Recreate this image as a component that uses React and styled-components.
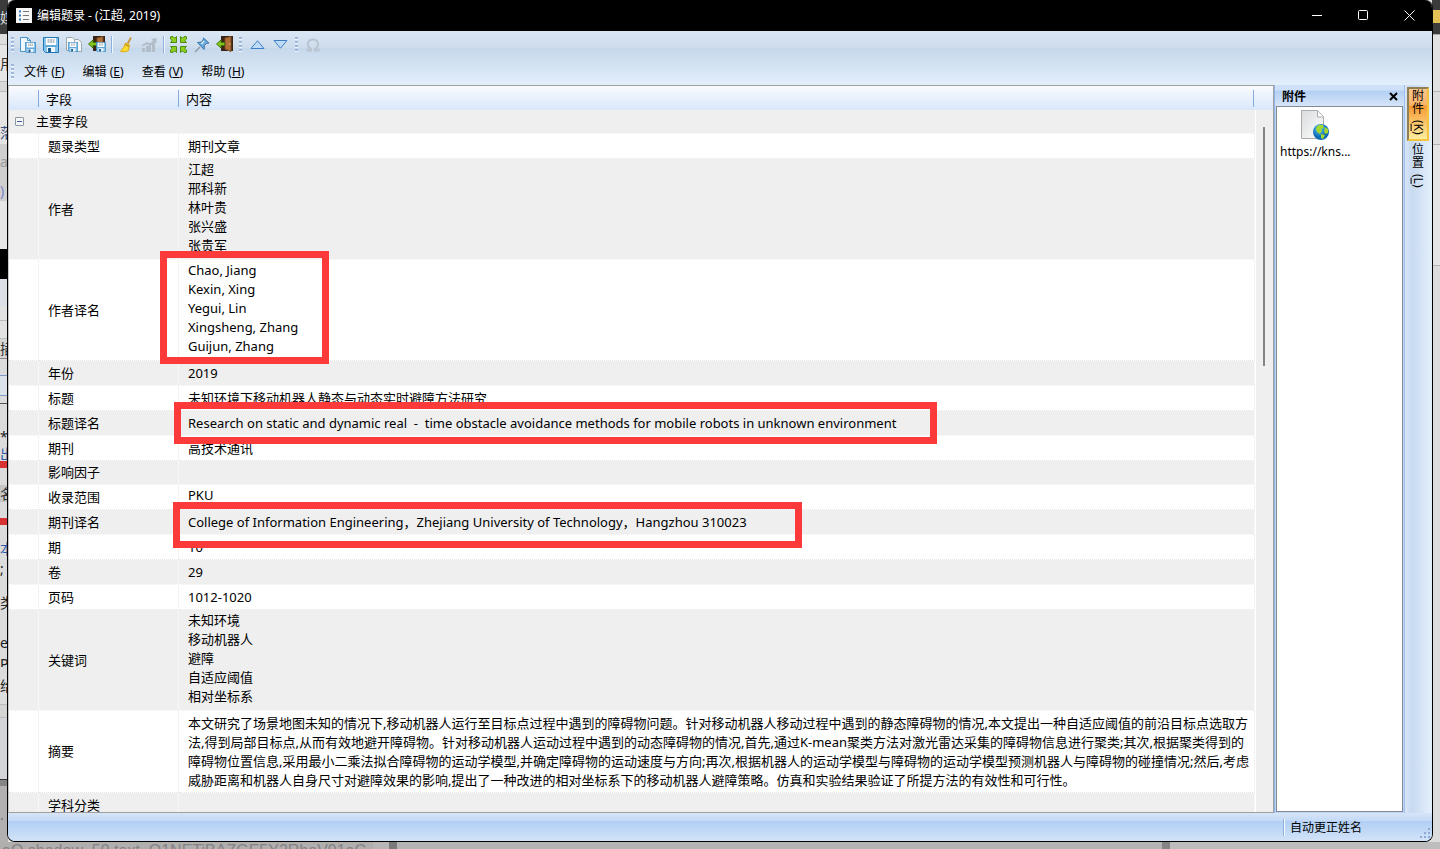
import React from 'react';
import styled, { createGlobalStyle, css } from 'styled-components';

const Global = createGlobalStyle`
  *, *::before, *::after { box-sizing: border-box; }
  body {
    margin: 0;
    overflow: hidden;
    font-family: 'Noto Sans', 'Noto Sans CJK SC', sans-serif;
    font-size: 13px;
    line-height: 19px;
    color: #000;
  }
  button { font: inherit; color: inherit; background: none; border: 0; padding: 0; margin: 0; }
`;

/* ---------- desktop behind the window ---------- */

const Desktop = styled.div`
  height: 100vh;
  display: grid;
  grid-template-columns: 8px minmax(0, 1fr) 8px;
  grid-template-rows: minmax(0, 1fr) 7px;
  background: #dcdcdc;
`;

const Strip = styled.div`
  display: flex;
  flex-direction: column;
  overflow: hidden;
`;

const Segment = styled.div`
  flex: ${p => (p.$h ? `0 0 ${p.$h}px` : '1')};
  display: flex;
  align-items: center;
  overflow: hidden;
  white-space: nowrap;
  background: ${p => p.$bg};
  color: ${p => p.$color || '#333'};
  border-top: ${p => (p.$line ? `1px solid ${p.$line}` : '0')};
  font-size: 14px;
`;

const Floor = styled.div`
  grid-column: 1 / -1;
  display: flex;
  overflow: hidden;
  background: #bcbcbc;
`;

const FloorPart = styled.div`
  flex: ${p => p.$flex};
  height: 8px;
  padding-left: 2px;
  overflow: hidden;
  white-space: nowrap;
  background: ${p => p.$bg};
  color: #858383;
  font: 16px/18px 'Liberation Sans', sans-serif;
`;

const leftParts = [
  [34, '#3b3b3b', '媒', '#ddd'],
  [10, '#dedede'],
  [37, '#e6e6e6', '用', '#333', '#bbb'],
  [10, '#d8d8d8', '', '', '#bbb'],
  [29, '#e4e4e4', '', '', '#bbb'],
  [24, '#e4e4e4', '落', '#35507c'],
  [35, '#cfcfcf', 'a', '#999'],
  [22, '#cfcfcf', ')', '#7a86c8'],
  [48, '#e6e6e6'],
  [30, '#000'],
  [27, '#dbdfe6'],
  [14, '#e2e2e2'],
  [18, '#e2e2e2', '', '', '#bbb'],
  [20, '#d6d6d6', '插', '#333', '#bbb'],
  [17, '#dcdcdc', '', '', '#888'],
  [20, '#dce2ea', '', '', '#7f9dc8'],
  [8, '#dcdcdc', '', '', '#7f9dc8'],
  [24, '#dcdcdc', '', '', '#555'],
  [18, '#dcdcdc', '*', '#222'],
  [16, '#dcdcdc', '出', '#2a5ba6'],
  [7, '#d93232'],
  [17, '#dcdcdc'],
  [17, '#c6c6c6', '名', '#333'],
  [16, '#dcdcdc'],
  [7, '#d93232'],
  [14, '#dcdcdc'],
  [18, '#dcdcdc', '本', '#2a5ba6'],
  [22, '#dcdcdc', ';', '#222'],
  [46, '#dcdcdc', '类', '#222'],
  [34, '#dcdcdc', 'e', '#222'],
  [0, '#dcdcdc', 'P', '#222'],
  [37, '#dcdcdc', '给', '#222'],
  [13, '#d4d4d4', '', '', '#bbb'],
  [62, '#d2d4d8', '', '', '#bbb'],
  [7, '#858585', '', '', '#333'],
  [56, '#b2b0b0', '.', '#777'],
];

const rightParts = [
  [10, '#3b3b3b'],
  [13, '#e3c056'],
  [11, '#3b3b3b'],
  [57, '#e2e2e2', '', '', '#aaa'],
  [53, '#dedede', '', '', '#b4b4b4'],
  [121, '#e4e4e4', '', '', '#b4b4b4'],
  [0, '#dcdcdc', '', '', '#b4b4b4'],
];

const SideStrip = ({ parts }) => (
  <Strip aria-hidden="true">
    {parts.map(([h, bg, text, color, line], i) => (
      <Segment key={i} $h={h} $bg={bg} $color={color} $line={line}>{text}</Segment>
    ))}
  </Strip>
);

/* ---------- window frame ---------- */

const Window = styled.main`
  display: flex;
  flex-direction: column;
  min-height: 0;
  margin: 0 -1px;
  border: 1px solid #000;
  border-top: 0;
  border-radius: 8px;
  overflow: hidden;
  background: #cfe0f5;
  position: relative;
`;

const TitleBar = styled.header`
  flex: 0 0 31px;
  display: flex;
  align-items: center;
  background: #000;
  color: #fff;
  padding-left: 8px;
`;

const Title = styled.h1`
  flex: 1;
  margin: 0 0 0 5px;
  font-size: 12px;
  font-weight: 400;
`;

const CaptionButton = styled.button`
  width: 46px;
  height: 31px;
  display: flex;
  align-items: center;
  justify-content: center;
`;

const Bars = styled.div`
  flex: 0 0 54px;
  background: linear-gradient(#dae6f4 0, #cddcec 17px, #c5d8eb 17px, #e3eefb 54px);
`;

const Toolbar = styled.div`
  height: 27px;
  display: flex;
  align-items: center;
  padding-left: 3px;
`;

const MenuBar = styled.nav`
  height: 27px;
  display: flex;
  align-items: center;
  padding-left: 3px;
`;

const Grip = styled.span`
  width: 3px;
  height: 15px;
  margin-right: ${p => p.$after || 6}px;
  background: repeating-linear-gradient(#9db8dc 0 2px, #f4f9ff 2px 3px, transparent 3px 4px);
`;

const Divider = styled.span`
  width: 2px;
  height: 17px;
  margin: 0 4px 0 5px;
  background: linear-gradient(90deg, #8fb0df 50%, #f1f7ff 50%);
`;

const ToolButton = styled.button`
  width: 18px;
  height: 18px;
  margin-right: ${p => p.$after ?? 5}px;
  display: flex;
  align-items: center;
  justify-content: center;
  svg { display: block; flex: none; }
`;

const MenuButton = styled.button`
  font-size: 12px;
  margin-right: 18px;
  white-space: nowrap;
`;

/* ---------- record table ---------- */

const Body = styled.div`
  flex: 1;
  min-height: 0;
  display: flex;
`;

const TablePane = styled.section`
  flex: 1;
  min-width: 0;
  display: flex;
  background: #fff;
  border: 1px solid #a0a0a0;
  border-left-color: #c8c8c8;
  position: relative;
  overflow: hidden;
`;

const Records = styled.table`
  flex: 1;
  min-width: 0;
  align-self: flex-start;
  border-collapse: separate;
  border-spacing: 0;
  table-layout: fixed;
  width: 100%;
`;

const HeadCell = styled.th`
  height: 24px;
  padding: 2px 0 0 7px;
  text-align: left;
  font-weight: 400;
  line-height: 19px;
  background:
    linear-gradient(#83abdf, #83abdf) ${p => (p.$last ? 'calc(100% - 1px)' : '100%')} 4px / 1px 17px no-repeat,
    linear-gradient(#f9fbff, #d9e7fb);
`;

const Row = styled.tr`
  height: ${p => p.$h}px;
  background: ${p => (p.$shade ? '#efefef' : '#fff')};
  td, th {
    padding: 0;
    font-weight: 400;
    text-align: left;
    border-bottom: 1px dotted ${p => (p.$shade ? '#fff' : '#e6e6e6')};
    border-right: 1px dotted ${p => (p.$shade ? '#fff' : '#e6e6e6')};
  }
  th { padding-left: 9px; }
`;

const Value = styled.td`
  && {
    padding-left: 9px;
    padding-top: ${p => (p.$top ? 1 : 0)}px;
    vertical-align: ${p => (p.$top ? 'top' : 'middle')};
    white-space: pre-wrap;
  }
`;

const GroupCell = styled.td`
  && { border-right-color: transparent; }
`;

const GroupLine = styled.div`
  display: flex;
  align-items: center;
  gap: 12px;
  padding-left: 6px;
`;

const Toggle = styled.button`
  width: 9px;
  height: 9px;
  border: 1px solid #8c97a8;
  border-radius: 1px;
  background: linear-gradient(#3c5a99, #3c5a99) center / 5px 1px no-repeat, #f6f6f6;
`;

const Track = styled.div`
  flex: 0 0 18px;
  padding-top: 41px;
  padding-left: 8px;
  background: linear-gradient(#f9fbff, #d9e7fb) 0 0 / 100% 24px no-repeat, linear-gradient(90deg, #fff 1px, #efefef 1px);
`;

const Thumb = styled.div`
  width: 2px;
  height: 239px;
  background: #858585;
`;

const Mark = styled.div`
  position: absolute;
  left: ${p => p.$x}px;
  top: ${p => p.$y}px;
  width: ${p => p.$w}px;
  height: ${p => p.$h}px;
  border: 7px solid #fc3a3a;
`;

/* ---------- attachments ---------- */

const Side = styled.aside`
  flex: 0 0 131px;
  display: flex;
  flex-direction: column;
  background: #bcd5f5;
  padding: 0 1px 1px;
  border-left: 1px solid #8fb4e6;
  border-right: 1px solid #9fc0ec;
`;

const SideHead = styled.div`
  flex: 0 0 21px;
  display: flex;
  align-items: center;
  justify-content: space-between;
  padding: 2px 6px 0 7px;
  background: linear-gradient(#cfe1f9 0 5px, #b3cff3 6px, #d5e5f9);
  margin: 0 -1px;
  svg { display: block; }
`;

const SideTitle = styled.h2`
  margin: 0;
  font-size: 12px;
  font-weight: 700;
`;

const Files = styled.div`
  flex: 1;
  background: #fff;
  border: 1px solid #848a95;
  padding: 3px;
`;

const FileLink = styled.a`
  display: flex;
  flex-direction: column;
  width: 72px;
  color: #000;
  font-size: 12px;
  text-decoration: none;
  gap: 2px;
  svg { display: block; margin-left: 20px; }
`;

const TabRail = styled.div`
  flex: 0 0 27px;
  display: flex;
  flex-direction: column;
  padding: 2px 0 0 2px;
  background: linear-gradient(90deg, #d8e5f5 0, #c7daf0 7px, #e4effc);
`;

const RailTab = styled.button`
  width: 22px;
  height: 54px;
  display: flex;
  flex-direction: column;
  align-items: center;
  font-size: 12px;
  line-height: 13px;
  border: 2px solid transparent;
  ${p => p.$active && css`
    border-color: #f3c53c;
    border-left-color: #8f7f55;
    border-top-color: #8f7f55;
    background: linear-gradient(#fbc58c 0, #fbb46a 32%, #f89a33 34%, #fdeea0);
  `}
`;

const Upright = styled.span`
  writing-mode: vertical-rl;
  line-height: 16px;
  margin-top: 5px;
`;

/* ---------- status bar ---------- */

const StatusBar = styled.footer`
  flex: 0 0 28px;
  display: flex;
  justify-content: flex-end;
  align-items: center;
  background: linear-gradient(#d6e5f8 0, #c3d9f6 8px, #b1cff3 8px, #d2e3f8);
`;

const Status = styled.span`
  width: 136px;
  font-size: 12px;
  padding-left: 6px;
  line-height: 17px;
  border-left: 1px solid #8fb0df;
  box-shadow: inset 1px 0 #f4f8ff;
`;

const SizeGrip = styled.svg`
  align-self: flex-end;
  margin: 0 1px 1px 0;
`;

/* ---------- icons ---------- */

const Floppy = ({ x = 0, y = 0, s = 16 }) => (
  <svg x={x} y={y} width={s} height={s} viewBox="0 0 16 16">
    <path d="M.5 .5h15v15H2.500l-2-2z" fill="#86c3ea" stroke="#1f76b5" />
    <path d="M3 1h10v7H3z" fill="#fff" />
    <path d="M4.500 3h7M4.500 5h7" stroke="#76848f" strokeDasharray="2 .6" />
    <path d="M2 9h12" stroke="#3f93cf" />
    <path d="M4 10h8v5H4z" fill="#eef6fb" />
    <path d="M5 11h3v4H5z" fill="#1c5e93" />
  </svg>
);

const Door = () => (
  <g>
    <path d="M5 0h12v15H5z" fill="#3a2416" />
    <path d="M9 2l6-1.500v15L9 13z" fill="#b3713a" stroke="#7b4a22" />
    <path d="M13 8h1.500" stroke="#f0c070" />
    <path d="M.5 8l4.500-4v2.500h3.500v3H5V12z" fill="#86c41c" stroke="#3f7a09" />
  </g>
);

const inward = 'M6.500 .5v6h-6L2.300 4.700 .5 3 .5 .8 3 .5 4.700 2.300z';

const icons = {
  saveNew: (
    <svg width="18" height="16" viewBox="0 0 18 16">
      <path d="M1.500 .5h7l3 3v11h-10z" fill="#eef7fd" stroke="#4b96c9" />
      <path d="M8.500 .5v3h3" fill="none" stroke="#4b96c9" />
      <Floppy x={6} y={5} s={11} />
    </svg>
  ),
  save: <svg width="16" height="16"><Floppy /></svg>,
  saveCopy: (
    <svg width="18" height="16" viewBox="0 0 18 16">
      <path d="M1.500 .5h6l2 2v11h-8z" fill="#f6f8f9" stroke="#9ba6ae" />
      <path d="M9.500 2.500h4l3 3v9h-7z" fill="#f6f8f9" stroke="#9ba6ae" />
      <Floppy x={3} y={5} s={10} />
    </svg>
  ),
  saveExit: (
    <svg width="18" height="17" viewBox="0 0 18 17">
      <Door />
      <Floppy x={8} y={6} s={10} />
    </svg>
  ),
  broom: (
    <svg width="16" height="16" viewBox="0 0 16 16">
      <path d="M13 .5L9.500 7" stroke="#c8963c" strokeWidth="1.800" />
      <path d="M7.500 6l4 2-1 5.500Q8 15.500 2.500 14.500 6 11 7.500 6z" fill="#f9dc30" stroke="#e0ac14" />
      <path d="M7 7.500l4 2" stroke="#a9722c" />
    </svg>
  ),
  chart: (
    <svg width="16" height="16" viewBox="0 0 16 16" fill="#b3bdc8">
      <path d="M1 11h3v4H1zM5 9h5v6H5zM11 5h3v10h-3z" />
      <path d="M1 9.500V8l5-3 3 1.500 3-3-2-1.500 5.500-1v5.500L13.500 5 9.500 9 6 7.500z" />
    </svg>
  ),
  grid: (
    <svg width="17" height="17" viewBox="0 0 17 17" fill="#8fd01c" stroke="#4d8c10">
      <path d={inward} />
      <path d={inward} transform="translate(17 0) scale(-1 1)" />
      <path d={inward} transform="translate(0 17) scale(1 -1)" />
      <path d={inward} transform="translate(17 17) scale(-1 -1)" />
    </svg>
  ),
  pin: (
    <svg width="16" height="16" viewBox="0 0 16 16">
      <path d="M1 15l5-5" stroke="#8d99a5" strokeWidth="1.500" />
      <path d="M9.500 1l5.500 5-2.500 .5-2 2L10 12.500 3.500 5.500l4-.5 1.500-2z" fill="#6aa9dc" stroke="#3d77ad" />
      <path d="M10 4L7.500 7" stroke="#d9ecfa" strokeWidth="1.500" />
    </svg>
  ),
  exit: <svg width="17" height="17" viewBox="0 0 17 17"><Door /></svg>,
  up: <svg width="15" height="9" viewBox="0 0 15 9"><path d="M7.500 .8L14 8.500H1z" fill="#bedcf7" stroke="#3c7fc6" /></svg>,
  down: <svg width="15" height="9" viewBox="0 0 15 9"><path d="M7.500 8.200L14 .5H1z" fill="#bedcf7" stroke="#3c7fc6" /></svg>,
  omega: (
    <svg width="14" height="14" viewBox="0 0 14 14" fill="none" stroke="#b9c4d1" strokeWidth="2">
      <path d="M1.500 10.500v2H5V11C0 8 1.500 1.500 7 1.500S14 8 9 11v1.500h3.500v-2" />
    </svg>
  ),
};

const ListIcon = () => (
  <svg width="16" height="15" viewBox="0 0 16 15">
    <rect width="16" height="15" fill="#f7f7f7" />
    <path d="M3 3.500h2M3 7.500h2M3 11.500h2" stroke="#2b7cc0" strokeWidth="2" />
    <path d="M7 3.500h6M7 7.500h6M7 11.500h6" stroke="#777" />
  </svg>
);

const WebFile = () => (
  <svg width="30" height="30" viewBox="0 0 30 30">
    <defs>
      <linearGradient id="sheet" x2="1" y2="1"><stop stopColor="#d9dbdc" /><stop offset="1" stopColor="#fff" /></linearGradient>
      <radialGradient id="sea" cx=".4" cy=".3"><stop stopColor="#59c8f3" /><stop offset="1" stopColor="#0d6cb5" /></radialGradient>
    </defs>
    <path d="M1.500 .5h16l6 6v22h-22z" fill="url(#sheet)" stroke="#a9adb0" />
    <path d="M17.500 1v6h6" fill="#fff" stroke="#a9adb0" />
    <circle cx="21" cy="22" r="8" fill="url(#sea)" />
    <path d="M17 16q3-2 6-1l1 3-3 1 1 2-2 3-3-2-1-3zM25 17l3 2v4l-3 1-1-3zM21 24l4 1-2 4-2-1z" fill="#a3d82e" />
  </svg>
);

/* ---------- content ---------- */

const rows = [
  { label: '题录类型', value: '期刊文章', h: 25 },
  { label: '作者', value: '江超\n邢科新\n林叶贵\n张兴盛\n张贵军', h: 101, top: true },
  { label: '作者译名', value: 'Chao, Jiang\nKexin, Xing\nYegui, Lin\nXingsheng, Zhang\nGuijun, Zhang', h: 101, top: true },
  { label: '年份', value: '2019', h: 25 },
  { label: '标题', value: '未知环境下移动机器人静态与动态实时避障方法研究', h: 25 },
  { label: '标题译名', value: 'Research on static and dynamic real  -  time obstacle avoidance methods for mobile robots in unknown environment', h: 25 },
  { label: '期刊', value: '高技术通讯', h: 25 },
  { label: '影响因子', value: '', h: 24 },
  { label: '收录范围', value: 'PKU', h: 25, top: true },
  { label: '期刊译名', value: 'College of Information Engineering，Zhejiang University of Technology，Hangzhou 310023', h: 25 },
  { label: '期', value: '10', h: 25 },
  { label: '卷', value: '29', h: 25 },
  { label: '页码', value: '1012-1020', h: 25 },
  { label: '关键词', value: '未知环境\n移动机器人\n避障\n自适应阈值\n相对坐标系', h: 101, top: true },
  { label: '摘要', value: '本文研究了场景地图未知的情况下,移动机器人运行至目标点过程中遇到的障碍物问题。针对移动机器人移动过程中遇到的静态障碍物的情况,本文提出一种自适应阈值的前沿目标点选取方法,得到局部目标点,从而有效地避开障碍物。针对移动机器人运动过程中遇到的动态障碍物的情况,首先,通过K-mean聚类方法对激光雷达采集的障碍物信息进行聚类;其次,根据聚类得到的障碍物位置信息,采用最小二乘法拟合障碍物的运动学模型,并确定障碍物的运动速度与方向;再次,根据机器人的运动学模型与障碍物的运动学模型预测机器人与障碍物的碰撞情况;然后,考虑威胁距离和机器人自身尺寸对避障效果的影响,提出了一种改进的相对坐标系下的移动机器人避障策略。仿真和实验结果验证了所提方法的有效性和可行性。', h: 82 },
  { label: '学科分类', value: '', h: 25 },
];

const menus = [['文件', 'F'], ['编辑', 'E'], ['查看', 'V'], ['帮助', 'H']];

const marks = [
  { x: 151, y: 165, w: 169, h: 113 },
  { x: 165, y: 316, w: 763, h: 42 },
  { x: 164, y: 416, w: 629, h: 46 },
];

const Tool = ({ name, label, after }) => (
  <ToolButton type="button" aria-label={label} $after={after}>{icons[name]}</ToolButton>
);

export default function App() {
  return (
    <>
      <Global />
      <Desktop>
        <SideStrip parts={leftParts} />
        <Window>
          <TitleBar>
            <ListIcon />
            <Title>编辑题录 - (江超, 2019)</Title>
            <CaptionButton type="button" aria-label="最小化">
              <svg width="11" height="11"><path d="M0 5.500h10" stroke="#fff" /></svg>
            </CaptionButton>
            <CaptionButton type="button" aria-label="最大化">
              <svg width="11" height="11"><rect x=".5" y=".5" width="9" height="9" rx="1" fill="none" stroke="#fff" /></svg>
            </CaptionButton>
            <CaptionButton type="button" aria-label="关闭">
              <svg width="11" height="11"><path d="M.5 .5l10 10M10.500 .5l-10 10" stroke="#fff" /></svg>
            </CaptionButton>
          </TitleBar>

          <Bars>
            <Toolbar role="toolbar" aria-label="工具栏">
              <Grip $after={5} />
              <Tool name="saveNew" label="保存并新建" />
              <Tool name="save" label="保存" />
              <Tool name="saveCopy" label="保存副本" />
              <Tool name="saveExit" label="保存并退出" after={0} />
              <Divider />
              <Tool name="broom" label="清理" />
              <Tool name="chart" label="更新" after={0} />
              <Divider />
              <Tool name="grid" label="收起" after={6} />
              <Tool name="pin" label="固定" after={4} />
              <Tool name="exit" label="退出" after={6} />
              <Grip />
              <Tool name="up" label="上一条" />
              <Tool name="down" label="下一条" after={6} />
              <Grip />
              <Tool name="omega" label="符号" />
            </Toolbar>
            <MenuBar>
              <Grip $after={10} />
              {menus.map(([name, key]) => (
                <MenuButton type="button" key={key}>{name} (<u>{key}</u>)</MenuButton>
              ))}
            </MenuBar>
          </Bars>

          <Body>
            <TablePane>
              <Records>
                <colgroup>
                  <col width="30" />
                  <col width="140" />
                  <col />
                </colgroup>
                <thead>
                  <tr>
                    <HeadCell aria-label="分组" />
                    <HeadCell scope="col">字段</HeadCell>
                    <HeadCell scope="col" $last>内容</HeadCell>
                  </tr>
                </thead>
                <tbody>
                  <Row $h={24} $shade>
                    <GroupCell colSpan={3}>
                      <GroupLine>
                        <Toggle type="button" aria-label="折叠" />
                        主要字段
                      </GroupLine>
                    </GroupCell>
                  </Row>
                  {rows.map((r, i) => (
                    <Row key={r.label} $h={r.h} $shade={i % 2 === 1}>
                      <td />
                      <th scope="row">{r.label}</th>
                      <Value $top={r.top}>{r.value}</Value>
                    </Row>
                  ))}
                </tbody>
              </Records>
              <Track><Thumb /></Track>
              {marks.map(m => (
                <Mark key={m.y} $x={m.x} $y={m.y} $w={m.w} $h={m.h} />
              ))}
            </TablePane>

            <Side>
              <SideHead>
                <SideTitle>附件</SideTitle>
                <button type="button" aria-label="关闭附件">
                  <svg width="9" height="9"><path d="M1 1l7 7M8 1L1 8" stroke="#000" strokeWidth="2" /></svg>
                </button>
              </SideHead>
              <Files>
                <FileLink href="#attachment">
                  <WebFile />
                  https://kns...
                </FileLink>
              </Files>
            </Side>

            <TabRail>
              <RailTab type="button" $active>附<br />件<Upright>(<u>K</u>)</Upright></RailTab>
              <RailTab type="button">位<br />置<Upright>(<u>L</u>)</Upright></RailTab>
            </TabRail>
          </Body>

          <StatusBar>
            <Status>自动更正姓名</Status>
            <SizeGrip width="12" height="12" fill="#8fa9d6">
              <path d="M9 0h2v2H9zM9 4h2v2H9zM9 8h2v2H9zM5 4h2v2H5zM5 8h2v2H5zM1 8h2v2H1z" />
            </SizeGrip>
          </StatusBar>
        </Window>
        <SideStrip parts={rightParts} />
        <Floor aria-hidden="true">
          <FloorPart $flex="0 0 373px" $bg="#b1aeae">aO shadow_50 text_Q1NETiBAZGE5Y2RheV91aC</FloorPart>
          <FloorPart $flex="0 0 16px" $bg="#b8b6b6" />
          <FloorPart $flex="0 0 8px" $bg="#7b7b7b" />
          <FloorPart $flex="1" $bg="#b5b4b4" />
          <FloorPart $flex="0 0 8px" $bg="#858585" />
          <FloorPart $flex="0 0 270px" $bg="#bdbdbd" />
        </Floor>
      </Desktop>
    </>
  );
}
